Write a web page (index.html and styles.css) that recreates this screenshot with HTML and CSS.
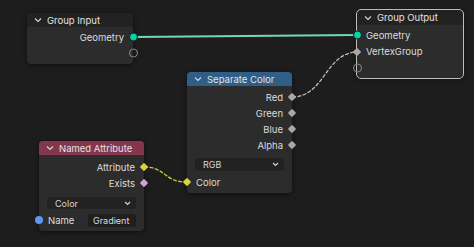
FILE: index.html
```html
<!DOCTYPE html>
<html>
<head>
<meta charset="utf-8">
<link rel="stylesheet" href="styles.css">
</head>
<body>
<div class="canvas">
  <svg class="links" width="474" height="247" viewBox="0 0 474 247">
    <path class="link-geo" d="M133 37 C 200 37, 290 35, 357 35"/>
    <path class="link-float" d="M292 97 C 325 97, 325 52, 358 52"/>
    <path class="link-color" d="M144 167 C 166 167, 164 182, 186 182"/>
  </svg>

  <div class="node group-input">
    <div class="node-head head-dark"><span class="chev"><svg width="8" height="6" viewBox="0 0 8 6"><path d="M1 1.5 L4 4.5 L7 1.5" /></svg></span><span>Group Input</span></div>
    <div class="node-body">
      <div class="row out">Geometry<span class="sock sock-r geo"></span></div>
      <div class="row out"><span class="sock sock-r empty"></span></div>
    </div>
  </div>

  <div class="node group-output">
    <div class="node-head head-dark"><span class="chev"><svg width="8" height="6" viewBox="0 0 8 6"><path d="M1 1.5 L4 4.5 L7 1.5" /></svg></span><span>Group Output</span></div>
    <div class="node-body">
      <div class="row in"><span class="sock sock-l geo"></span>Geometry</div>
      <div class="row in"><span class="sock sock-l dia grey"></span>VertexGroup</div>
      <div class="row in"><span class="sock sock-l empty"></span></div>
    </div>
  </div>

  <div class="node sep-color">
    <div class="node-head head-blue"><span class="chev"><svg width="8" height="6" viewBox="0 0 8 6"><path d="M1 1.5 L4 4.5 L7 1.5" /></svg></span><span>Separate Color</span></div>
    <div class="node-body">
      <div class="row out">Red<span class="sock sock-r dia grey"></span></div>
      <div class="row out">Green<span class="sock sock-r dia grey"></span></div>
      <div class="row out">Blue<span class="sock sock-r dia grey"></span></div>
      <div class="row out">Alpha<span class="sock sock-r dia grey"></span></div>
      <div class="dropdown"><span>RGB</span><svg width="7" height="5" viewBox="0 0 7 5"><path d="M1 1 L3.5 3.5 L6 1" /></svg></div>
      <div class="row in color-in"><span class="sock sock-l dia yellow"></span>Color</div>
    </div>
  </div>

  <div class="node named-attr">
    <div class="node-head head-red"><span class="chev"><svg width="8" height="6" viewBox="0 0 8 6"><path d="M1 1.5 L4 4.5 L7 1.5" /></svg></span><span>Named Attribute</span></div>
    <div class="node-body">
      <div class="row out">Attribute<span class="sock sock-r dia yellow"></span></div>
      <div class="row out">Exists<span class="sock sock-r dia pink"></span></div>
      <div class="dropdown"><span>Color</span><svg width="7" height="5" viewBox="0 0 7 5"><path d="M1 1 L3.5 3.5 L6 1" /></svg></div>
      <div class="row in name-row"><span class="sock sock-l blue"></span><span class="name-label">Name</span><span class="field">Gradient</span></div>
    </div>
  </div>
</div>
</body>
</html>
```
FILE: styles.css
```css
html, body {
  margin: 0;
  padding: 0;
  background: #1d1d1d;
}
.canvas {
  position: relative;
  width: 474px;
  height: 247px;
  overflow: hidden;
  background: #1d1d1d;
  font-family: Inter, "Noto Sans", sans-serif;
  font-size: 9.5px;
  color: #dcdcdc;
}
.links {
  position: absolute;
  left: 0;
  top: 0;
  z-index: 0;
}
.links path {
  fill: none;
}
.link-geo {
  stroke: #72d9b3;
  stroke-width: 2;
}
.link-float {
  stroke: #bdbdbd;
  stroke-width: 1.3;
  stroke-dasharray: 4 1.4;
}
.link-color {
  stroke: #c9c63a;
  stroke-width: 1.3;
  stroke-dasharray: 4 1.4;
}
.node {
  position: absolute;
  z-index: 1;
  background: #2c2c2c;
  border-radius: 4px;
  box-shadow: 0 1px 5px rgba(0, 0, 0, 0.55);
  box-sizing: border-box;
}
.group-input { left: 27px; top: 13px; width: 106px; height: 51px; }
.group-output { left: 357px; top: 10px; width: 106px; height: 68px; outline: 1px solid #bdbdbd; outline-offset: 0; }
.sep-color { left: 187px; top: 72px; width: 105px; height: 121px; }
.named-attr { left: 39px; top: 141px; width: 105px; height: 90px; }

.node-head {
  height: 14px;
  display: flex;
  align-items: center;
  gap: 4px;
  padding-left: 7px;
  border-radius: 4px 4px 0 0;
  color: #e2e2e2;
  font-size: 9.5px;
}
.head-dark { background: #222222; }
.group-output .head-dark { height: 15px; }
.head-blue { background: #2f5e86; }
.head-red { background: #84364d; }
.chev { display: flex; align-items: center; width: 9px; }
.chev path, .dropdown path {
  fill: none;
  stroke: #d8d8d8;
  stroke-width: 1.1;
}
.node-body {
  display: flex;
  flex-direction: column;
  padding-top: 2px;
}
.sep-color .node-body { padding-top: 3px; }
.named-attr .node-body { padding-top: 4px; }
.group-output .row { height: 16.5px; }
.row {
  position: relative;
  height: 16px;
  display: flex;
  align-items: center;
}
.row.out { justify-content: flex-end; padding-right: 9px; }
.row.in { justify-content: flex-start; padding-left: 9px; }
.sock {
  position: absolute;
  top: 50%;
  width: 7px;
  height: 7px;
  border-radius: 50%;
  box-sizing: border-box;
  transform: translate(0, -50%);
}
.sock-r { right: -4px; }
.sock-l { left: -4px; }
.geo { background: #00d6a3; border: 1px solid #1b1b1b; width: 9px; height: 9px; }
.sock-r.geo { right: -4.5px; }
.sock-l.geo { left: -4.5px; }
.empty { background: transparent; border: 1px solid #8a8a8a; width: 9px; height: 9px; }
.sock-r.empty { right: -4.5px; }
.sock-l.empty { left: -4.5px; }
.blue { background: #5f95ee; width: 8px; height: 8px; }
.dia {
  border-radius: 1px;
  width: 6px;
  height: 6px;
  top: 50%;
  margin-top: -3px;
  transform: rotate(45deg);
  transform-origin: center;
}
.sock-r.dia { right: -3px; }
.sock-l.dia { left: -3px; }
.grey { background: #a8a8a8; }
.yellow { background: #d6d63a; }
.pink { background: #c9a6d6; }

.dropdown {
  margin: 5px 8px 0 8px;
  height: 13px;
  background: #222222;
  border-radius: 3px;
  display: flex;
  align-items: center;
  justify-content: space-between;
  padding: 0 5px 0 8px;
  font-size: 9px;
  color: #d8d8d8;
}
.color-in { margin-top: 3px; }
.named-attr .dropdown { margin-top: 6px; height: 12px; }
.name-row { gap: 0; padding-right: 8px; height: 16px; margin-top: 3px; }
.name-label { flex: 1; }
.field {
  width: 48px;
  height: 13px;
  background: #1f1f1f;
  border-radius: 3px;
  display: flex;
  align-items: center;
  padding-left: 5px;
  box-sizing: border-box;
  font-size: 9px;
}
```
